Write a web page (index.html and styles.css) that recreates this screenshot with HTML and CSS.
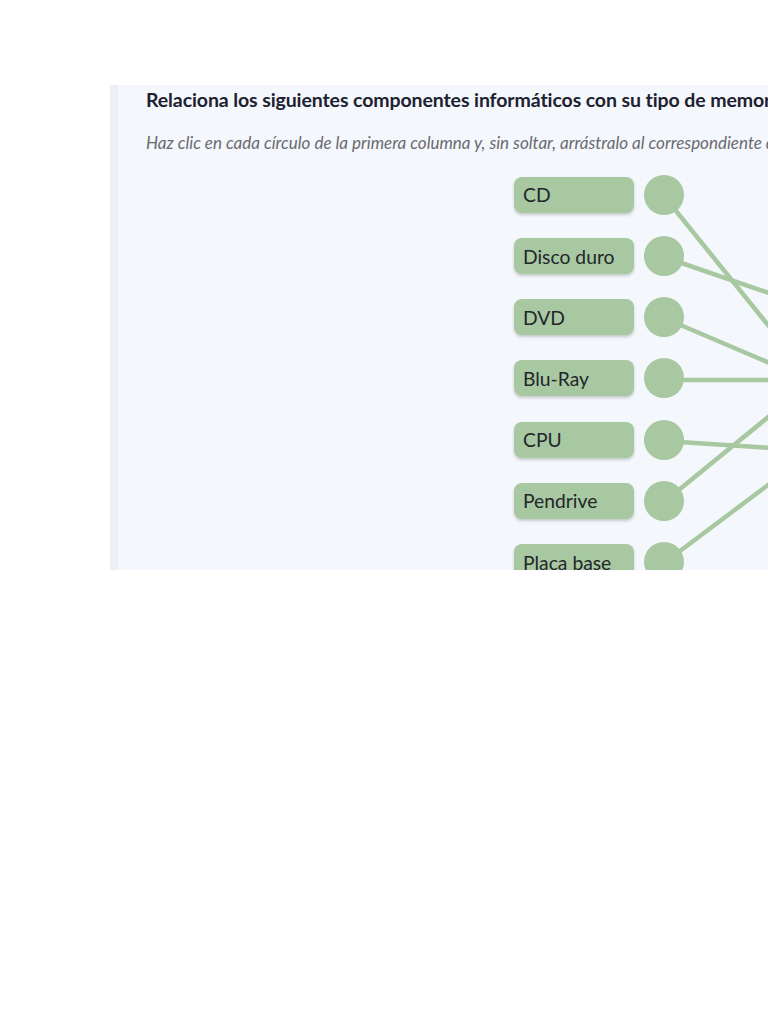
FILE: index.html
```html
<!DOCTYPE html>
<html lang="es">
<head>
<meta charset="utf-8">
<title>Relaciona</title>
<link rel="stylesheet" href="styles.css">
</head>
<body>
<div class="page">
  <section class="panel">
    <h2 class="title">Relaciona los siguientes componentes informáticos con su tipo de memoria</h2>
    <p class="hint">Haz clic en cada círculo de la primera columna y, sin soltar, arrástralo al correspondiente de la segunda columna.</p>
    <div class="match">
      <svg class="links" width="260" height="420" viewBox="514 177 260 420" aria-hidden="true">
        <g stroke="#a8c8a1" stroke-width="4.5" stroke-linecap="round" fill="none">
          <line x1="664" y1="196" x2="772" y2="330"/>
          <line x1="664" y1="257" x2="772" y2="294"/>
          <line x1="664" y1="318" x2="772" y2="364"/>
          <line x1="664" y1="380" x2="772" y2="380"/>
          <line x1="664" y1="441" x2="772" y2="448"/>
          <line x1="664" y1="502" x2="772" y2="414"/>
          <line x1="664" y1="563" x2="772" y2="482"/>
        </g>
      </svg>
      <div class="row"><span class="item">CD</span><span class="dot"></span></div>
      <div class="row"><span class="item">Disco duro</span><span class="dot"></span></div>
      <div class="row"><span class="item">DVD</span><span class="dot"></span></div>
      <div class="row"><span class="item">Blu-Ray</span><span class="dot"></span></div>
      <div class="row"><span class="item">CPU</span><span class="dot"></span></div>
      <div class="row"><span class="item">Pendrive</span><span class="dot"></span></div>
      <div class="row"><span class="item">Placa base</span><span class="dot"></span></div>
    </div>
  </section>
</div>
</body>
</html>
```

FILE: styles.css
```css
html, body {
  margin: 0;
  padding: 0;
  background: #ffffff;
}
body {
  width: 768px;
  height: 1024px;
  overflow: hidden;
  font-family: Lato, "Open Sans", sans-serif;
}
.page {
  padding: 85px 0 0 110px;
}
.panel {
  box-sizing: border-box;
  width: 658px;
  height: 485px;
  overflow: hidden;
  background: #f4f7fc;
  border-left: 8px solid #eeeff2;
  padding: 0 0 0 28px;
}
.title {
  margin: 0;
  padding-top: 2.5px;
  font-size: 19.5px;
  line-height: 24px;
  font-weight: 700;
  color: #1d2130;
  white-space: nowrap;
  letter-spacing: -0.1px;
}
.hint {
  margin: 21px 0 0;
  font-size: 17px;
  line-height: 20px;
  font-style: italic;
  color: #6a6a70;
  white-space: nowrap;
}
.match {
  position: relative;
  margin: 24.4px 0 0 368px;
  display: flex;
  flex-direction: column;
  gap: 25.2px;
}
.links {
  position: absolute;
  left: 0;
  top: 0;
  z-index: 0;
}
.row {
  position: relative;
  z-index: 1;
  display: flex;
  align-items: center;
  gap: 10px;
  height: 36px;
}
.item {
  box-sizing: border-box;
  width: 120px;
  height: 36px;
  padding-left: 9px;
  display: flex;
  align-items: center;
  background: #a8c8a2;
  border-radius: 8px;
  box-shadow: 0 2px 3px rgba(60, 70, 60, 0.25);
  font-size: 19.3px;
  color: #23262b;
}
.dot {
  width: 40px;
  height: 40px;
  border-radius: 50%;
  background: #a8c8a1;
  flex: none;
}
```
